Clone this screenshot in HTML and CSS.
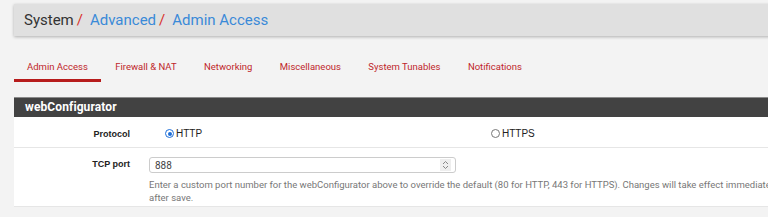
FILE: index.html
```html
<!DOCTYPE html>
<html>
<head>
<meta charset="utf-8">
<link rel="stylesheet" href="styles.css">
</head>
<body>
<div class="crumbs">
  <span class="crumb-plain">System</span><span class="sep">/</span>
  <a class="crumb-link">Advanced</a><span class="sep">/</span>
  <a class="crumb-link">Admin Access</a>
</div>
<ul class="tabs">
  <li class="tab active">Admin Access</li>
  <li class="tab">Firewall &amp; NAT</li>
  <li class="tab">Networking</li>
  <li class="tab">Miscellaneous</li>
  <li class="tab">System Tunables</li>
  <li class="tab">Notifications</li>
</ul>
<div class="panel">
  <div class="panel-heading">webConfigurator</div>
  <div class="panel-body">
    <div class="row row-protocol">
      <div class="label">Protocol</div>
      <div class="field radios">
        <label class="radio radio-first"><span class="dot checked"></span>HTTP</label>
        <label class="radio"><span class="dot"></span>HTTPS</label>
      </div>
    </div>
    <div class="row row-port">
      <div class="label">TCP port</div>
      <div class="field">
        <div class="input">
          <span class="value">888</span>
          <span class="spin">
            <svg width="7" height="10" viewBox="0 0 7 10"><path d="M1 4 L3.5 1.5 L6 4 M1 6 L3.5 8.5 L6 6" fill="none" stroke="#888" stroke-width="1"/></svg>
          </span>
        </div>
        <div class="help">Enter a custom port number for the webConfigurator above to override the default (80 for HTTP, 443 for HTTPS). Changes will take effect immediately after save.</div>
      </div>
    </div>
  </div>
</div>
</body>
</html>
```

FILE: styles.css
```css
html, body {
  margin: 0;
  padding: 0;
  background: #f3f3f3;
  overflow: hidden;
  font-family: Roboto, "Liberation Sans", sans-serif;
}
body {
  width: 768px;
  height: 217px;
}
.crumbs {
  margin: 4px -30px 0 14px;
  height: 32px;
  background: #e0e0e0;
  box-shadow: 0 1px 3px rgba(0,0,0,0.28);
  display: flex;
  align-items: center;
  padding-left: 10px;
  font-size: 15px;
  line-height: 1;
  white-space: nowrap;
}
.crumb-plain { color: #333; }
.crumb-link { color: #3a8ad8; }
.sep {
  color: #d9302c;
  margin: 0 7px 0 3px;
}
.tabs {
  list-style: none;
  margin: 14px 0 0 14px;
  padding: 0;
  display: flex;
  height: 32px;
}
.tab {
  font-size: 9.5px;
  color: #c0262b;
  padding: 0 13px;
  line-height: 34px;
  height: 32px;
  box-sizing: border-box;
  white-space: nowrap;
}
.tab + .tab { margin-left: 1.4px; }
.tab.active {
  border-bottom: 3px solid #b71c1c;
}
.panel {
  margin: 15px -80px 0 14px;
}
.panel-heading {
  background: #424242;
  border-top: 1px solid #8a8a8a;
  height: 19px;
  line-height: 19px;
  color: #fff;
  font-weight: bold;
  font-size: 12px;
  padding-left: 11px;
  letter-spacing: 0.1px;
}
.panel-body {
  background: #fff;
}
.row {
  display: flex;
  border-bottom: 1px solid #e6e6e6;
}
.label {
  width: 116px;
  text-align: right;
  font-family: "Liberation Sans", Arial, sans-serif;
  font-weight: bold;
  font-size: 9px;
  color: #222;
  flex: none;
}
.field {
  margin-left: 19px;
  flex: 1;
}
.row-protocol {
  height: 30px;
  align-items: center;
}
.row-protocol .label {
  padding-top: 3px;
}
.radios {
  display: flex;
  margin-left: 35px;
  padding-top: 3px;
}
.radio {
  display: flex;
  align-items: center;
  font-family: "Liberation Sans", Arial, sans-serif;
  font-size: 10px;
  color: #222;
}
.radio-first { width: 326px; }
.dot {
  width: 7px;
  height: 7px;
  border: 1px solid #777;
  border-radius: 50%;
  margin-right: 2px;
  box-sizing: content-box;
  position: relative;
}
.dot.checked {
  border-color: #1e6fd9;
}
.dot.checked::after {
  content: "";
  position: absolute;
  left: 1.5px;
  top: 1.5px;
  width: 4px;
  height: 4px;
  border-radius: 50%;
  background: #1e6fd9;
}
.row-port {
  height: 59px;
  padding-top: 9px;
  box-sizing: border-box;
}
.row-port .label {
  padding-top: 2px;
}
.input {
  width: 307px;
  height: 16px;
  box-sizing: border-box;
  border: 1px solid #ccc;
  border-radius: 3px;
  display: flex;
  align-items: center;
  justify-content: space-between;
  padding: 0 4px 0 5px;
  font-size: 10px;
  color: #444;
}
.spin {
  width: 11px;
  height: 12px;
  background: #eee;
  display: flex;
  align-items: center;
  justify-content: center;
}
.help {
  margin-top: 5px;
  font-size: 9.5px;
  line-height: 13px;
  color: #777;
  width: 636px;
}
```
